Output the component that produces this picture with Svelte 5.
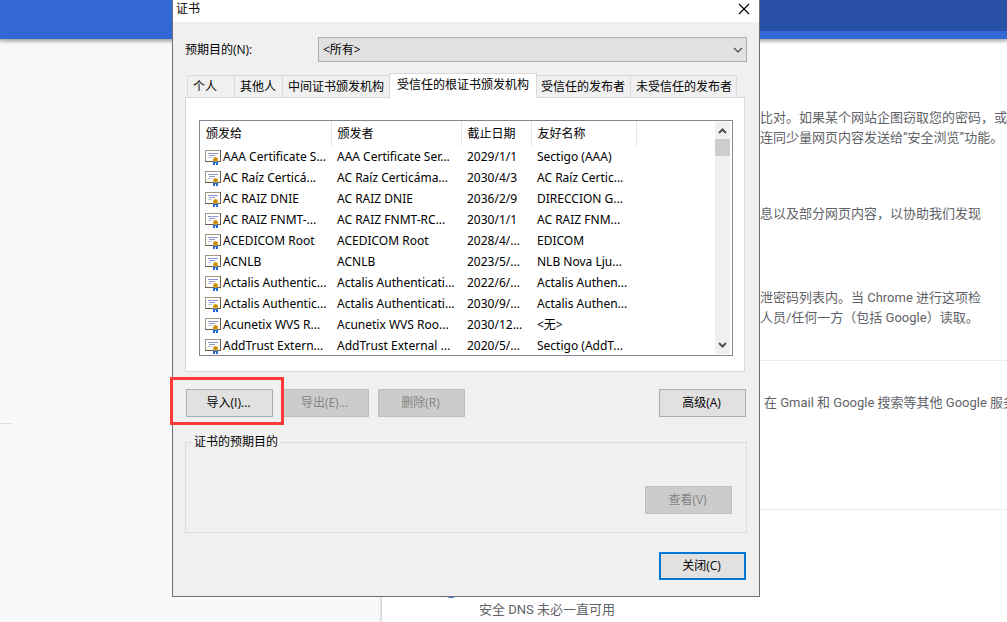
<script>
	let purpose = "all";
	let activeTab = 3;

	const tabs = [
		{ name: "个人", width: 47 },
		{ name: "其他人", width: 48 },
		{ name: "中间证书颁发机构", width: 107 },
		{ name: "受信任的根证书颁发机构", width: 148 },
		{ name: "受信任的发布者", width: 93 },
		{ name: "未受信任的发布者", width: 107 },
	];

	const certificates = [
		["AAA Certificate S...", "AAA Certificate Ser...", "2029/1/1", "Sectigo (AAA)"],
		["AC Raíz Certicá...", "AC Raíz Certicáma...", "2030/4/3", "AC Raíz Certic..."],
		["AC RAIZ DNIE", "AC RAIZ DNIE", "2036/2/9", "DIRECCION G..."],
		["AC RAIZ FNMT-...", "AC RAIZ FNMT-RC...", "2030/1/1", "AC RAIZ FNM..."],
		["ACEDICOM Root", "ACEDICOM Root", "2028/4/...", "EDICOM"],
		["ACNLB", "ACNLB", "2023/5/...", "NLB Nova Lju..."],
		["Actalis Authentic...", "Actalis Authenticati...", "2022/6/...", "Actalis Authen..."],
		["Actalis Authentic...", "Actalis Authenticati...", "2030/9/...", "Actalis Authen..."],
		["Acunetix WVS R...", "Acunetix WVS Roo...", "2030/12...", "<无>"],
		["AddTrust Extern...", "AddTrust External ...", "2020/5/...", "Sectigo (AddT..."],
	];
</script>

<div class="page">
	<header><div class="search"></div></header>
	<div class="columns">
		<aside><hr /></aside>
		<main>
			<section class="browsing">
				<p>行比对。如果某个网站企图窃取您的密码，或<br />会连同少量网页内容发送给“安全浏览”功能。</p>
				<p class="report">信息以及部分网页内容，以协助我们发现</p>
				<p class="leak">外泄密码列表内。当 Chrome 进行这项检<br />何人员/任何一方（包括 Google）读取。</p>
			</section>
			<section class="services">
				<p>在 Gmail 和 Google 搜索等其他 Google 服务</p>
			</section>
			<section class="dns">
				<label>
					<input type="radio" name="dns" checked />
					<span>安全 DNS 未必一直可用</span>
				</label>
			</section>
		</main>
	</div>

	<div class="dialog" role="dialog" aria-labelledby="title">
		<div class="titlebar">
			<span id="title">证书</span>
			<button class="close" aria-label="关闭">
				<svg width="12" height="12" viewBox="0 0 12 12">
					<path d="M1 1 L11 11 M11 1 L1 11" />
				</svg>
			</button>
		</div>

		<div class="body">
			<div class="purpose">
				<label for="purpose">预期目的(N):</label>
				<div class="select">
					<select id="purpose" bind:value={purpose}>
						<option value="all">&lt;所有&gt;</option>
					</select>
					<svg width="10" height="6" viewBox="0 0 10 6">
						<path d="M1 1 L5 5 L9 1" />
					</svg>
				</div>
			</div>

			<div class="tabs" role="tablist">
				{#each tabs as tab, i}
					<button
						role="tab"
						class:active={i === activeTab}
						aria-selected={i === activeTab}
						style="width: {tab.width}px"
						on:click={() => (activeTab = i)}>{tab.name}</button
					>
				{/each}
			</div>

			<div class="panel">
				<div class="list">
					<table>
						<thead>
							<tr>
								<th class="to">颁发给</th>
								<th class="by">颁发者</th>
								<th class="date">截止日期</th>
								<th class="name">友好名称</th>
								<th class="rest"></th>
							</tr>
						</thead>
						<tbody>
							{#each certificates as [to, by, date, name]}
								<tr>
									<td class="subject">
										<div>
											<svg width="16" height="16" viewBox="0 0 16 16">
												<rect x="0.5" y="1.5" width="15" height="11" fill="#fff" stroke="#a39684" />
												<path d="M15.5 1 V13 M0 12.5 H16" fill="none" stroke="#6e5c45" />
												<path d="M3 4.5 H13 M4 6.5 H10" stroke="#8d96cf" />
												<path d="M3 8.5 H7" stroke="#c3c7e4" />
												<path d="M8 12 V16 H10 V14 H11 V16 H13 V12 Z" fill="#2467d8" />
												<circle cx="10.5" cy="10.5" r="2.5" fill="#d99c12" />
												<circle cx="10.5" cy="10.5" r="1" fill="#b97d08" />
											</svg>
											{to}
										</div>
									</td>
									<td>{by}</td>
									<td>{date}</td>
									<td>{name}</td>
									<td></td>
								</tr>
							{/each}
						</tbody>
					</table>
					<div class="scrollbar">
						<svg width="9" height="6" viewBox="0 0 9 6">
							<path d="M1 5 L4.5 1.5 L8 5" />
						</svg>
						<div class="thumb"></div>
						<svg width="9" height="6" viewBox="0 0 9 6">
							<path d="M1 1 L4.5 4.5 L8 1" />
						</svg>
					</div>
				</div>
			</div>

			<div class="actions">
				<div class="marked"><button class="btn">导入(I)...</button></div>
				<button class="btn" disabled>导出(E)...</button>
				<button class="btn" disabled>删除(R)</button>
				<button class="btn advanced">高级(A)</button>
			</div>

			<fieldset>
				<legend>证书的预期目的</legend>
				<button class="btn" disabled>查看(V)</button>
			</fieldset>

			<div class="footer">
				<button class="btn default">关闭(C)</button>
			</div>
		</div>
	</div>
</div>

<style>
	:global(body) {
		margin: 0;
	}

	.page {
		position: relative;
		display: flex;
		flex-direction: column;
		min-height: 100vh;
		overflow: hidden;
		background: #fff;
		color: #5f6368;
		font: 13px/20px Roboto, "Noto Sans CJK SC", sans-serif;
	}

	* {
		box-sizing: border-box;
	}

	header {
		position: relative;
		height: 39px;
		padding-left: 680px;
		background: #3367d6;
		box-shadow: 0 1px 4px 1px rgba(0, 0, 0, 0.4);
	}

	.search {
		height: 31px;
		background: #2850a7;
	}

	.columns {
		display: flex;
		flex: 1;
	}

	aside {
		flex: none;
		width: 382px;
		padding-top: 384px;
		background: #f8f9fb;
	}

	hr {
		width: 13px;
		height: 1px;
		margin: 0;
		border: 0;
		background: #e0e2e5;
	}

	main {
		flex: 1;
		min-width: 0;
		box-shadow: 0 0 3px rgba(0, 0, 0, 0.4);
		white-space: nowrap;
	}

	section {
		border-bottom: 1px solid #ebebeb;
	}

	p {
		margin: 0;
	}

	.browsing {
		padding: 69px 0 32px 365px;
	}

	.report {
		margin-top: 56px;
	}

	.leak {
		margin-top: 64px;
	}

	.services {
		padding: 32px 0 96px 382px;
	}

	.dns {
		padding: 72px 0 0 61px;
		border: 0;
	}

	.dns label {
		display: flex;
		gap: 20px;
	}

	.dns input {
		appearance: none;
		width: 16px;
		height: 16px;
		margin: 0;
		border: 2px solid #1a62d6;
		border-radius: 50%;
	}

	.dns span {
		padding-top: 18px;
	}

	.dialog {
		position: absolute;
		top: 0;
		left: 172px;
		width: 588px;
		border: 1px solid #707070;
		border-top: 0;
		background: #f0f0f0;
		color: #000;
		font: 12px/16px "Open Sans", "Noto Sans CJK SC", sans-serif;
	}

	button,
	select {
		font: inherit;
		color: inherit;
	}

	.titlebar {
		display: flex;
		align-items: center;
		justify-content: space-between;
		height: 22px;
		padding: 0 9px 4px 3px;
		background: #fff;
	}

	.close {
		display: flex;
		padding: 0;
		border: 0;
		background: none;
	}

	svg {
		display: block;
		flex: none;
	}

	.close path,
	.select path {
		fill: none;
		stroke: #000;
		stroke-width: 1.1;
	}

	.body {
		padding: 15px 12px 16px;
	}

	.purpose {
		display: flex;
		align-items: center;
	}

	.purpose label {
		width: 133px;
	}

	.select {
		position: relative;
		flex: 1;
	}

	select {
		display: block;
		appearance: none;
		width: 100%;
		height: 25px;
		padding: 0 4px;
		border: 1px solid #adadad;
		border-radius: 0;
		background: #e1e1e1;
	}

	.select svg {
		position: absolute;
		top: 10px;
		right: 4px;
		pointer-events: none;
	}

	.select path {
		stroke: #444;
	}

	.tabs {
		display: flex;
		align-items: flex-end;
		height: 24px;
		margin-top: 11px;
		padding-left: 2px;
	}

	.tabs button {
		height: 22px;
		padding: 0 0 0 5px;
		border: 1px solid #d9d9d9;
		border-width: 1px 0 0 1px;
		background: #f0f0f0;
		text-align: left;
		white-space: nowrap;
	}

	.tabs button:last-child {
		border-right-width: 1px;
	}

	.tabs .active {
		position: relative;
		height: 25px;
		margin-bottom: -1px;
		padding: 0 0 2px 7px;
		border-right-width: 1px;
		background: #fff;
	}

	.tabs .active + button {
		border-left: 0;
		padding-left: 4px;
	}

	.panel {
		margin-right: 2px;
		padding: 22px 11px 15px 13px;
		border: 1px solid #d9d9d9;
		background: #fff;
	}

	.list {
		display: flex;
		height: 236px;
		overflow: hidden;
		border: 1px solid #828790;
		font-family: "Noto Sans", "Noto Sans CJK SC", sans-serif;
	}

	table {
		flex: 1;
		border-collapse: collapse;
		table-layout: fixed;
		width: 0;
	}

	th,
	td {
		height: 21px;
		padding: 0 0 0 6px;
		font-weight: normal;
		text-align: left;
		white-space: nowrap;
	}

	th {
		height: 25px;
		border-right: 1px solid #e5e5e5;
	}

	th.rest {
		border: 0;
	}

	.to {
		width: 131px;
	}

	.by {
		width: 130px;
	}

	.date {
		width: 70px;
	}

	.name {
		width: 105px;
	}

	.subject div {
		display: flex;
		align-items: center;
		gap: 2px;
		margin-left: -1px;
	}

	.scrollbar {
		display: flex;
		flex-direction: column;
		align-items: center;
		width: 15px;
		margin: 1px 2px 1px 0;
		padding: 6px 0;
		background: #f0f0f0;
	}

	.scrollbar path {
		fill: none;
		stroke: #505050;
		stroke-width: 2;
	}

	.thumb {
		width: 15px;
		height: 17px;
		margin: 5px 0 auto;
		background: #cdcdcd;
	}

	.actions {
		display: flex;
		gap: 9px;
		margin-top: 17px;
		padding: 0 1px;
	}

	.btn {
		width: 87px;
		height: 28px;
		padding: 0 2px 0 0;
		border: 1px solid #adadad;
		background: #e1e1e1;
	}

	.btn:disabled {
		border-color: #bfbfbf;
		background: #ccc;
		color: #838383;
	}

	.advanced {
		margin-left: auto;
	}

	/* red frame drawing attention to the import button */
	.marked {
		position: relative;
	}

	.marked::after {
		content: "";
		position: absolute;
		inset: -12px -11px -8px -16px;
		border: 3px solid #ff3838;
		pointer-events: none;
	}

	fieldset {
		display: flex;
		justify-content: flex-end;
		margin: 17px 0 0;
		padding: 36px 14px 18px;
		border: 1px solid #dcdcdc;
	}

	legend {
		margin-left: -8px;
		padding: 0 2px;
	}

	.footer {
		display: flex;
		justify-content: flex-end;
		margin-top: 19px;
		padding-right: 1px;
	}

	.btn.default {
		border: 2px solid #0078d7;
	}
</style>
